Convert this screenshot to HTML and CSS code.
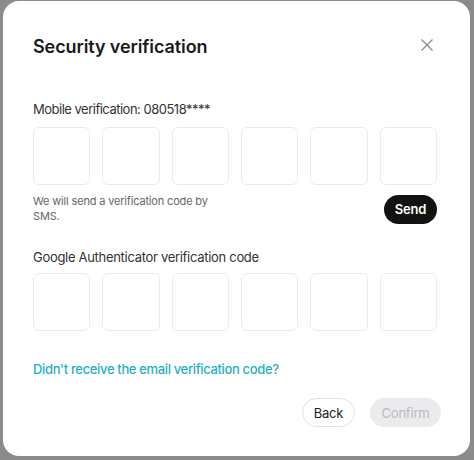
FILE: index.html
```html
<!DOCTYPE html>
<html lang="en">
<head>
<meta charset="utf-8">
<title>Security verification</title>
<link rel="stylesheet" href="styles.css">
</head>
<body>
<div class="modal">
  <div class="header">
    <h1 class="title">Security verification</h1>
    <button class="close" aria-label="Close">
      <svg width="12" height="12" viewBox="0 0 12 12"><path d="M0.5 0.5L11.5 11.5M11.5 0.5L0.5 11.5" stroke="#8c8c8c" stroke-width="1.3" fill="none"/></svg>
    </button>
  </div>

  <div class="label label-mobile">Mobile verification: 080518****</div>
  <div class="codes">
    <div class="cell"></div><div class="cell"></div><div class="cell"></div>
    <div class="cell"></div><div class="cell"></div><div class="cell"></div>
  </div>
  <div class="sms-row">
    <p class="help">We will send a verification code by<br>SMS.</p>
    <button class="btn btn-send">Send</button>
  </div>

  <div class="label label-google">Google Authenticator verification code</div>
  <div class="codes">
    <div class="cell"></div><div class="cell"></div><div class="cell"></div>
    <div class="cell"></div><div class="cell"></div><div class="cell"></div>
  </div>

  <a class="link" href="#">Didn't receive the email verification code?</a>

  <div class="footer">
    <button class="btn btn-back">Back</button>
    <button class="btn btn-confirm">Confirm</button>
  </div>
</div>
</body>
</html>
```

FILE: styles.css
```css
html, body {
  margin: 0;
  padding: 0;
}
body {
  background: #8b8b8b;
  width: 474px;
  height: 460px;
  overflow: hidden;
  font-family: Inter, "Liberation Sans", Arial, sans-serif;
}
.modal {
  box-sizing: border-box;
  margin: 1px 0 0 3px;
  width: 467px;
  height: 455px;
  background: #fff;
  border-radius: 16px;
  padding: 34px 33px 0 30px;
  display: flex;
  flex-direction: column;
}
.header {
  display: flex;
  align-items: center;
  justify-content: space-between;
  height: 24px;
}
.title {
  margin: 0;
  font-size: 18px;
  line-height: 24px;
  font-weight: 600;
  color: #1a1a1a;
  letter-spacing: -0.1px;
}
.close {
  width: 20px;
  height: 20px;
  padding: 0;
  border: 0;
  background: none;
  display: flex;
  align-items: center;
  justify-content: center;
  margin-top: -5px;
}
.label {
  font-size: 13px;
  line-height: 18px;
  color: #333;
  letter-spacing: -0.35px;
}
.label-mobile { margin-top: 41px; letter-spacing: -0.5px; }
.label-google { margin-top: 24px; letter-spacing: -0.3px; }
.codes {
  display: grid;
  grid-template-columns: repeat(6, 1fr);
  gap: 12px;
  margin-top: 9px;
}
.label-google + .codes { margin-top: 7px; }
.cell {
  box-sizing: border-box;
  height: 58px;
  border: 1px solid #ebebeb;
  border-radius: 6px;
}
.sms-row {
  display: flex;
  align-items: center;
  justify-content: space-between;
  margin-top: 9px;
}
.help {
  margin: 0;
  font-size: 11px;
  line-height: 15px;
  color: #666;
  letter-spacing: -0.17px;
}
.btn {
  font-family: inherit;
  font-size: 13px;
  border-radius: 999px;
  height: 29px;
  cursor: pointer;
  letter-spacing: -0.2px;
}
.btn-send {
  background: #121212;
  color: #fff;
  border: 0;
  font-weight: 600;
  padding: 0;
  width: 53px;
}
.link {
  margin-top: 29px;
  font-size: 13px;
  line-height: 18px;
  font-weight: 500;
  color: #1fb1c3;
  text-decoration: none;
  align-self: flex-start;
  letter-spacing: -0.35px;
}
.footer {
  display: flex;
  justify-content: flex-end;
  gap: 15px;
  margin-top: 20px;
  margin-right: -4px;
}
.btn-back {
  background: #fff;
  border: 1px solid #e0e0e0;
  color: #222;
  width: 53px;
  padding: 0;
}
.btn-confirm {
  background: #ebebee;
  border: 0;
  color: #b8b9be;
  width: 71px;
  padding: 0;
}
```
